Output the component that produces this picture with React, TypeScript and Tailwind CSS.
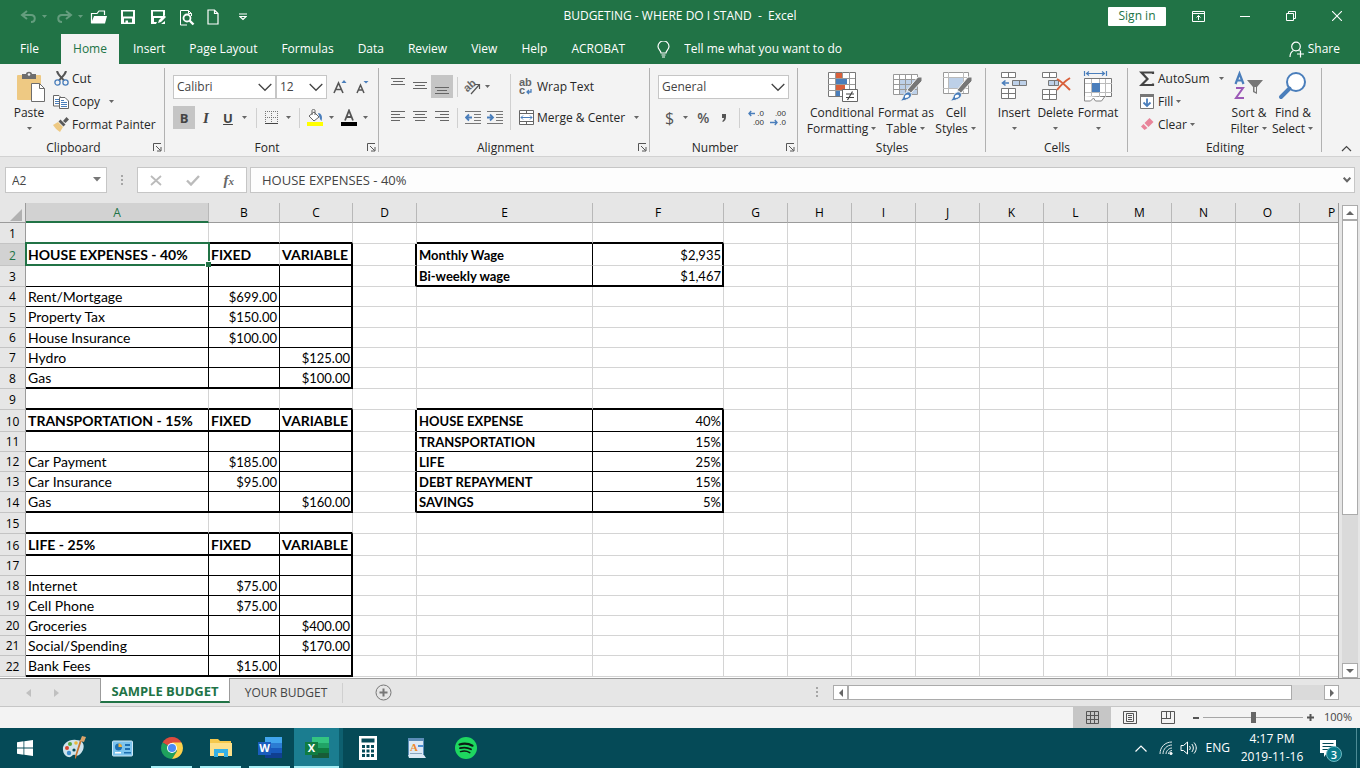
import { useState } from "react";
import type { ReactNode } from "react";
import clsx from "clsx";

/* ---------- data ---------- */

const columns = [
  { id: "A", w: "w-[183px]" },
  { id: "B", w: "w-[71px]" },
  { id: "C", w: "w-[73px]" },
  { id: "D", w: "w-16" },
  { id: "E", w: "w-44" },
  { id: "F", w: "w-[131px]" },
  ...["G", "H", "I", "J", "K", "L", "M", "N", "O", "P"].map((id) => ({ id, w: "w-16" })),
];

const cells: Record<string, string> = {
  A2: "HOUSE EXPENSES - 40%", B2: "FIXED", C2: "VARIABLE",
  A4: "Rent/Mortgage", B4: "$699.00",
  A5: "Property Tax", B5: "$150.00",
  A6: "House Insurance", B6: "$100.00",
  A7: "Hydro", C7: "$125.00",
  A8: "Gas", C8: "$100.00",
  A10: "TRANSPORTATION - 15%", B10: "FIXED", C10: "VARIABLE",
  A12: "Car Payment", B12: "$185.00",
  A13: "Car Insurance", B13: "$95.00",
  A14: "Gas", C14: "$160.00",
  A16: "LIFE - 25%", B16: "FIXED", C16: "VARIABLE",
  A18: "Internet", B18: "$75.00",
  A19: "Cell Phone", B19: "$75.00",
  A20: "Groceries", C20: "$400.00",
  A21: "Social/Spending", C21: "$170.00",
  A22: "Bank Fees", B22: "$15.00",
  E2: "Monthly Wage", F2: "$2,935",
  E3: "Bi-weekly wage", F3: "$1,467",
  E10: "HOUSE EXPENSE", F10: "40%",
  E11: "TRANSPORTATION", F11: "15%",
  E12: "LIFE", F12: "25%",
  E13: "DEBT REPAYMENT", F13: "15%",
  E14: "SAVINGS", F14: "5%",
};

const tallRows = [2, 10, 16];
const midRows = [1, 3, 5, 8, 9, 14, 15, 22];

function rowHeight(row: number) {
  if (tallRows.includes(row)) return "h-[22px]";
  if (midRows.includes(row)) return "h-[21px]";
  return "h-5";
}

const inBudget = (row: number) => (row >= 2 && row <= 8) || (row >= 10 && row <= 14) || row >= 16;
const inSummary = (row: number) => row === 2 || row === 3 || (row >= 10 && row <= 14);

function bottomBorder(col: string, row: number) {
  if ("ABC".includes(col)) {
    if ([1, 2, 8, 9, 10, 14, 15, 16, 22].includes(row)) return "border-b-2 border-b-black";
    return "border-b border-b-black";
  }
  if ("EF".includes(col)) {
    if ([1, 3, 9, 14].includes(row)) return "border-b-2 border-b-black";
    if (row >= 10 && row <= 13) return "border-b border-b-black";
  }
  return "border-b border-b-[#d4d4d4]";
}

function rightBorder(col: string, row: number) {
  if (col === "C" && inBudget(row)) return "border-r-2 border-r-black";
  if ("DF".includes(col) && inSummary(row)) return "border-r-2 border-r-black";
  if ("AB".includes(col) && inBudget(row) && !(col === "B" && row === 2)) return "border-r border-r-black";
  if (col === "E" && inSummary(row)) return "border-r border-r-black";
  return "border-r border-r-[#d4d4d4]";
}

/* ---------- small parts ---------- */

function Caret({ className = "" }: { className?: string }) {
  return (
    <svg width="7" height="4" viewBox="0 0 7 4" className={clsx("shrink-0", className)} aria-hidden>
      <path d="M1 0h5L3.500 3z" fill="#666" />
    </svg>
  );
}

function Chevron() {
  return (
    <svg width="14" height="9" viewBox="0 0 14 9" className="pointer-events-none absolute right-1 top-2" fill="none" stroke="#444" strokeWidth="1.3" aria-hidden>
      <path d="M.7 1 7 7.300 13.300 1" />
    </svg>
  );
}

function Launcher({ label }: { label: string }) {
  return (
    <button type="button" aria-label={label} className="absolute right-[3px] bottom-1">
      <svg width="9" height="9" viewBox="0 0 9 9" fill="none" stroke="#555" aria-hidden>
        <path d="M.5 8V.5H8M3 3l4.500 4.500M8 4v4H4" />
      </svg>
    </button>
  );
}

function Group({ label, width, launcher, children }: { label: string; width: string; launcher?: boolean; children: ReactNode }) {
  return (
    <section aria-label={label} className={clsx("relative flex h-[92px] shrink-0 flex-col", width)}>
      <div className="flex h-[76px] items-start">{children}</div>
      <div className="h-4 text-center leading-4">{label}</div>
      {launcher && <Launcher label={`${label} settings`} />}
      <span className="absolute top-1 right-0 h-[84px] w-px bg-[#b1b1b1]" />
    </section>
  );
}

function BigButton({ icon, lines, width, caretBelow }: { icon: ReactNode; lines: string[]; width: string; caretBelow?: boolean }) {
  return (
    <button type="button" className={clsx("flex shrink-0 flex-col items-center pt-1.5 leading-4", width)}>
      {icon}
      <span className="mt-[3px] whitespace-nowrap">{lines[0]}</span>
      {caretBelow ? (
        <Caret className="mt-1.5" />
      ) : (
        <span className="flex items-center gap-0.5 whitespace-nowrap">
          {lines[1]}
          <Caret />
        </span>
      )}
    </button>
  );
}

function SmallButton({ icon, label, caret, gap = "ml-0.5" }: { icon: ReactNode; label: string; caret?: boolean; gap?: string }) {
  return (
    <button type="button" className="flex h-[23px] items-center whitespace-nowrap">
      <span className="mr-[3px] flex w-4 justify-center">{icon}</span>
      {label}
      {caret && <Caret className={gap} />}
    </button>
  );
}

function Lines({ d, active, label }: { d: string; active?: boolean; label: string }) {
  return (
    <button type="button" aria-label={label} className={clsx("flex h-[23px] w-[22px] items-center justify-center", active && "bg-[#c5c5c5]")}>
      <svg width="14" height="17" viewBox="0 0 14 17" stroke="#666" aria-hidden>
        <path d={d} />
      </svg>
    </button>
  );
}

function Separator({ className = "h-5" }: { className?: string }) {
  return <span className={clsx("w-px bg-[#d0d0d0]", className)} />;
}

/* ---------- title bar + tabs ---------- */

function TitleBar() {
  return (
    <header className="grid h-[34px] grid-cols-[1fr_auto_1fr] items-center text-white">
      <div className="flex items-center pl-5">
        <button type="button" aria-label="Undo" className="flex items-center gap-1 opacity-30">
          <svg width="17" height="14" viewBox="0 0 17 14" fill="none" stroke="#fff" strokeWidth="2" aria-hidden>
            <path d="M7 1 2 5l5 4M3 5h8c5 0 5 7 0 7" />
          </svg>
          <svg width="7" height="4" aria-hidden><path d="M1 0h5L3.500 3z" fill="#fff" /></svg>
        </button>
        <button type="button" aria-label="Redo" className="ml-2 flex items-center gap-1 opacity-30">
          <svg width="17" height="14" viewBox="0 0 17 14" fill="none" stroke="#fff" strokeWidth="2" aria-hidden>
            <path d="m10 1 5 4-5 4m4-4H6c-5 0-5 7 0 7" />
          </svg>
          <svg width="7" height="4" aria-hidden><path d="M1 0h5L3.500 3z" fill="#fff" /></svg>
        </button>
        <button type="button" aria-label="Open" className="ml-1.5">
          <svg width="18" height="16" viewBox="0 0 18 16" aria-hidden>
            <path d="M1.500 14V4.500H7L9 2h5.500v4" fill="none" stroke="#fff" strokeWidth="1.200" />
            <path d="M4 7h13l-2 7.500H1z" fill="#fff" />
          </svg>
        </button>
        <button type="button" aria-label="Save" className="ml-3">
          <svg width="16" height="16" viewBox="0 0 16 16" aria-hidden>
            <path fillRule="evenodd" d="M1 1h14v14H1zM3 2.500V7.500h10V2.500zM4 9.500v4h1.500v-2H8v2h4v-4z" fill="#fff" />
          </svg>
        </button>
        <button type="button" aria-label="Save as" className="ml-3.5">
          <svg width="17" height="16" viewBox="0 0 17 16" aria-hidden>
            <path fillRule="evenodd" d="M1 1h14v5l-3 3H4v4h3l-1 2H1zM3 2.500V7h10V2.500z" fill="#fff" />
            <path d="m8 14 1-3 5-5 2 2-5 5zM11 15h4v-3z" fill="#fff" />
          </svg>
        </button>
        <button type="button" aria-label="Print preview" className="ml-3">
          <svg width="16" height="17" viewBox="0 0 16 17" fill="none" stroke="#fff" aria-hidden>
            <path d="M8 16H1.500V1.500h8l3 3V7M9.500 1.500v3h3" />
            <circle cx="8" cy="9" r="3.500" strokeWidth="1.800" />
            <path d="m10.500 11.500 4 4" strokeWidth="2.400" />
          </svg>
        </button>
        <button type="button" aria-label="New" className="ml-3">
          <svg width="12" height="16" viewBox="0 0 12 16" fill="none" stroke="#fff" strokeWidth="1.200" aria-hidden>
            <path d="M1 1h6.500L11 4.500V15H1zM7.500 1v3.500H11" />
          </svg>
        </button>
        <button type="button" aria-label="Customize toolbar" className="ml-5">
          <svg width="8" height="8" viewBox="0 0 8 8" fill="none" stroke="#fff" strokeWidth="1.200" aria-hidden>
            <path d="M0 1h8M.8 3.500 4 6.500l3.200-3z" />
          </svg>
        </button>
      </div>
      <h1 className="pb-0.5 whitespace-nowrap">BUDGETING - WHERE DO I STAND&nbsp; -&nbsp; Excel</h1>
      <div className="flex items-center justify-end pb-0.5">
        <button type="button" className="mr-[26px] h-[19px] w-[58px] rounded-[1px] bg-white leading-4 text-[#217346]">Sign in</button>
        <button type="button" aria-label="Ribbon display options" className="mr-[35px]">
          <svg width="13" height="11" viewBox="0 0 13 11" fill="none" stroke="#fff" aria-hidden>
            <path d="M.5.5h12v10H.5zM.5 2.500h12M6.500 9V4.500M4.500 6.500l2-2 2 2" />
          </svg>
        </button>
        <button type="button" aria-label="Minimize" className="mr-[36px]">
          <svg width="10" height="10" stroke="#fff" aria-hidden><path d="M0 5.500h10" /></svg>
        </button>
        <button type="button" aria-label="Restore" className="mr-9">
          <svg width="10" height="10" viewBox="0 0 10 10" fill="none" stroke="#fff" aria-hidden>
            <path d="M.5 2.500h7v7h-7zM2.500 2.500v-2h7v7h-2" />
          </svg>
        </button>
        <button type="button" aria-label="Close" className="mr-[18px]">
          <svg width="10" height="10" viewBox="0 0 10 10" stroke="#fff" strokeWidth="1.100" aria-hidden>
            <path d="m0 0 10 10M10 0 0 10" />
          </svg>
        </button>
      </div>
    </header>
  );
}

const tabs = ["Home", "Insert", "Page Layout", "Formulas", "Data", "Review", "View", "Help", "ACROBAT"];

function RibbonTabs() {
  return (
    <nav className="flex h-[30px] items-stretch text-white">
      <button type="button" className="w-[61px] pr-0.5">File</button>
      {tabs.map((t) => (
        <button key={t} type="button" className={clsx("whitespace-nowrap", t === "Home" ? "mr-0.5 w-[58px] bg-[#f3f3f3] text-[#217346]" : "px-3")}>
          {t}
        </button>
      ))}
      <label className="ml-5 flex items-center gap-3.5">
        <svg width="13" height="17" viewBox="0 0 13 17" fill="none" stroke="#fff" strokeWidth="1.200" aria-hidden>
          <path d="M4 12c0-2.500-3-3.500-3-6.500a5.500 5.500 0 0 1 11 0c0 3-3 4-3 6.500zM4.500 14h4M5 16h3" />
        </svg>
        <input type="text" aria-label="Tell me what you want to do" placeholder="Tell me what you want to do" className="w-44 bg-transparent outline-none placeholder:text-white" />
      </label>
      <button type="button" className="mr-5 ml-auto flex items-center gap-1">
        <svg width="15" height="17" viewBox="0 0 15 17" fill="none" stroke="#fff" strokeWidth="1.200" aria-hidden>
          <circle cx="7" cy="5.500" r="4.300" />
          <path d="M1 16c0-3.500 1.500-5.500 3.500-6.500M9.500 9.300l1 .7M11.500 9.500v7M8 13h7" />
        </svg>
        Share
      </button>
    </nav>
  );
}

/* ---------- ribbon ---------- */

function ClipboardGroup() {
  return (
    <Group label="Clipboard" width="w-[165px] pr-[18px]" launcher>
      <BigButton
        width="ml-2 w-[42px]"
        lines={["Paste"]}
        caretBelow
        icon={
          <svg width="32" height="32" viewBox="0 0 32 32" aria-hidden>
            <rect x="4" y="5" width="24" height="25" rx="1" fill="#eec983" />
            <path d="M9 4h4c0-3 6-3 6 0h4v5H9z" fill="#6d6d6d" />
            <circle cx="16" cy="4.500" r="1.300" fill="#f3f3f3" />
            <path d="M18.500 13.500h8l5 5v13h-13z" fill="#fff" stroke="#6d6d6d" />
            <path d="M26.500 13.500v5h5" fill="none" stroke="#6d6d6d" />
          </svg>
        }
      />
      <div className="ml-[3px] flex flex-col pt-[3px]">
        <SmallButton
          label="Cut"
          icon={
            <svg width="15" height="15" viewBox="0 0 15 15" fill="none" aria-hidden>
              <path d="M3 0c1 4 4 6 7 9.500M12 0c-1 4-4 6-7 9.500" stroke="#555" strokeWidth="2" />
              <circle cx="3.500" cy="11.500" r="2.600" stroke="#4a7ebb" strokeWidth="1.300" />
              <circle cx="11.500" cy="11.500" r="2.600" stroke="#4a7ebb" strokeWidth="1.300" />
            </svg>
          }
        />
        <SmallButton
          label="Copy"
          caret
          gap="ml-2"
          icon={
            <svg width="16" height="15" viewBox="0 0 16 15" aria-hidden>
              <path d="M.5 1.500H6L8.500 4v8h-8z" fill="#fff" stroke="#666" />
              <path d="M2 5.500h4M2 7.500h4M2 9.500h4" stroke="#4a7ebb" />
              <path d="M6.500 3.500H12L15.500 7v7.500h-9z" fill="#fff" stroke="#666" />
              <path d="M8 8.500h6M8 10.500h6M8 12.500h6M8 6.500h3" stroke="#4a7ebb" />
            </svg>
          }
        />
        <SmallButton
          label="Format Painter"
          icon={
            <svg width="16" height="15" viewBox="0 0 16 15" aria-hidden>
              <path d="m5 5 5 5-3 5c-3-2-5-4-7-7z" fill="#eec983" />
              <path d="m5.500 4.500 2-2 5 5-2 2zM10 4l3.500-4L16 2.500 12.500 6z" fill="#5a5a5a" />
            </svg>
          }
        />
      </div>
    </Group>
  );
}

const boxClass = "h-6 w-full appearance-none border border-[#c6c6c6] bg-white pl-[3px] text-xs text-[#444] outline-none";

function FontGroup() {
  return (
    <Group label="Font" width="w-[214px] pl-2 pr-[18px]" launcher>
      <div className="flex shrink-0 flex-col gap-[7px] pt-[11px]">
        <div className="flex h-6 items-center">
          <div className="relative w-[103px]">
            <select aria-label="Font name" className={boxClass}><option>Calibri</option></select>
            <Chevron />
          </div>
          <div className="relative w-[51px]">
            <select aria-label="Font size" className={boxClass}><option>12</option></select>
            <Chevron />
          </div>
          <button type="button" aria-label="Increase font size" className="ml-1.5">
            <svg width="14" height="16" viewBox="0 0 14 16" aria-hidden>
              <path d="M1 14 5.500 4l4.500 10M3 10.500h5" fill="none" stroke="#555" strokeWidth="1.600" />
              <path d="M8.500 4 11 1l2.500 3z" fill="#4a7ebb" />
            </svg>
          </button>
          <button type="button" aria-label="Decrease font size" className="ml-2">
            <svg width="14" height="16" viewBox="0 0 14 16" aria-hidden>
              <path d="m2 14 3.500-8L9 14M3.500 11h4" fill="none" stroke="#555" strokeWidth="1.500" />
              <path d="M8.500 2h5L11 4.500z" fill="#4a7ebb" />
            </svg>
          </button>
        </div>
        <div className="flex h-[23px] items-center text-[13px] text-[#444]">
          <button type="button" aria-pressed className="h-[23px] w-[22px] bg-[#c5c5c5] leading-5 font-bold">B</button>
          <button type="button" className="w-[22px] font-['Liberation_Serif',serif] text-[15px] leading-5 font-bold italic">I</button>
          <button type="button" className="w-[22px] leading-5 font-bold underline">U</button>
          <Caret className="ml-0.5" />
          <Separator className="ml-2 h-5" />
          <button type="button" aria-label="Borders" className="ml-2">
            <svg width="13" height="13" viewBox="0 0 13 13" fill="none" stroke="#777" aria-hidden>
              <path d="M0 .5h13M0 6.500h13M.5 0v12M6.500 0v12M12.500 0v12" strokeDasharray="1 1" />
              <path d="M0 12.500h13" stroke="#444" />
            </svg>
          </button>
          <Caret className="ml-[7px]" />
          <Separator className="ml-[7px] h-5" />
          <button type="button" aria-label="Fill color" className="ml-[7px]">
            <svg width="16" height="17" viewBox="0 0 16 17" aria-hidden>
              <path d="m2 7 5-4 5 5-5 4z" fill="#fff" stroke="#666" />
              <path d="M5 6V1.500c0-1.500 3-1.500 3 0V6" fill="none" stroke="#666" />
              <path d="M11 4c3 0 5 3 3.500 8C13 11 13 9 12 7z" fill="#4a7ebb" />
              <rect y="13" width="16" height="4" fill="#ffff00" />
            </svg>
          </button>
          <Caret className="ml-[5px]" />
          <button type="button" aria-label="Font color" className="ml-1.5">
            <svg width="16" height="17" viewBox="0 0 16 17" aria-hidden>
              <path d="m4 11.500 4-10 4 10M5.500 8h5" fill="none" stroke="#555" strokeWidth="1.800" />
              <rect y="13" width="16" height="4" fill="#000" />
            </svg>
          </button>
          <Caret className="ml-[5px]" />
        </div>
      </div>
    </Group>
  );
}

function AlignmentGroup() {
  return (
    <Group label="Alignment" width="w-[271px] pr-[26px] pl-2" launcher>
      <div className="flex shrink-0 flex-col gap-2 pt-[11px]">
        <div className="flex h-[23px] items-center">
          <Lines label="Top align" d="M0 .5h14M2 3.500h10M0 6.500h14" />
          <Lines label="Middle align" d="M0 4.500h14M2 7.500h10M0 10.500h14" />
          <Lines label="Bottom align" active d="M0 9.500h14M2 12.500h10M0 15.500h14" />
          <Separator className="ml-1 h-5" />
          <button type="button" aria-label="Orientation" className="ml-1.5">
            <svg width="18" height="18" viewBox="0 0 18 18" className="overflow-visible" aria-hidden>
              <text x="0" y="12" transform="rotate(-42 5 9)" fontSize="11" fontWeight="700" fill="#666" fontFamily="Liberation Sans">ab</text>
              <path d="m7 16 8-9M15.500 11V6.500H11" fill="none" stroke="#555" strokeWidth="1.200" />
            </svg>
          </button>
          <Caret className="ml-0.5" />
        </div>
        <div className="flex h-[23px] items-center">
          <Lines label="Align left" d="M0 2.500h14M0 5.500h9M0 8.500h14M0 11.500h9" />
          <Lines label="Center" d="M0 2.500h14M2 5.500h10M0 8.500h14M2 11.500h10" />
          <Lines label="Align right" d="M0 2.500h14M5 5.500h9M0 8.500h14M5 11.500h9" />
          <Separator className="ml-1 h-5" />
          <button type="button" aria-label="Decrease indent" className="ml-[7px]">
            <svg width="16" height="14" viewBox="0 0 16 14" fill="none" aria-hidden>
              <path d="M0 .5h16M9 3.500h7M9 6.500h7M9 9.500h7M0 12.500h16" stroke="#777" />
              <path d="M7 6.500H1.500M4 3.500l-3 3 3 3" stroke="#4a7ebb" strokeWidth="1.800" />
            </svg>
          </button>
          <button type="button" aria-label="Increase indent" className="ml-1.5">
            <svg width="16" height="14" viewBox="0 0 16 14" fill="none" aria-hidden>
              <path d="M0 .5h16M9 3.500h7M9 6.500h7M9 9.500h7M0 12.500h16" stroke="#777" />
              <path d="M0 6.500h5.500M3 3.500l3 3-3 3" stroke="#4a7ebb" strokeWidth="1.800" />
            </svg>
          </button>
        </div>
      </div>
      <Separator className="mt-2.5 ml-[7px] h-14 shrink-0" />
      <div className="ml-[7px] flex flex-col gap-2 pt-[11px]">
        <SmallButton
          label="Wrap Text"
          icon={
            <svg width="14" height="20" viewBox="0 0 14 20" className="overflow-visible" aria-hidden>
              <g fontSize="11" fontWeight="700" fill="#666" fontFamily="Liberation Sans">
                <text x="0" y="9">ab</text>
                <text x="0" y="17">c</text>
              </g>
              <path d="M12 12v3H8M10 13l-2 2 2 2" fill="none" stroke="#4a7ebb" strokeWidth="1.300" />
            </svg>
          }
        />
        <SmallButton
          label="Merge & Center"
          caret
          gap="ml-2"
          icon={
            <svg width="15" height="15" viewBox="0 0 15 15" fill="none" aria-hidden>
              <path d="M.5.5h14v14H.5z" fill="#fff" stroke="#666" />
              <path d="M0 3.500h15M0 11.500h15M7.500 0v3.500M7.500 11.500V15" stroke="#666" />
              <path d="M2 7.500h11M4 5.500l-2 2 2 2M11 5.500l2 2-2 2" stroke="#4a7ebb" />
            </svg>
          }
        />
      </div>
    </Group>
  );
}

function DecimalIcon({ top, bottom, arrow }: { top: string; bottom: string; arrow: string }) {
  return (
    <svg width="16" height="18" viewBox="0 0 16 18" className="overflow-visible" aria-hidden>
      <path d={arrow} fill="none" stroke="#4a7ebb" strokeWidth="1.400" />
      <g fontSize="8" textAnchor="end" fill="#333" fontFamily="Liberation Sans">
        <text x="16" y="7">{top}</text>
        <text x="16" y="16">{bottom}</text>
      </g>
    </svg>
  );
}

function NumberGroup() {
  return (
    <Group label="Number" width="w-[148px] pl-2 pr-[26px]" launcher>
      <div className="flex shrink-0 flex-col gap-[7px] pt-[11px]">
        <div className="relative w-[131px]">
          <select aria-label="Number format" className={boxClass}><option>General</option></select>
          <Chevron />
        </div>
        <div className="flex h-[23px] items-center text-base text-[#555]">
          <button type="button" className="ml-[7px] leading-5">$</button>
          <Caret className="ml-2" />
          <button type="button" className="ml-2 text-sm leading-5 font-semibold">%</button>
          <button type="button" aria-label="Comma style" className="ml-3">
            <svg width="6" height="8" viewBox="0 0 6 8" aria-hidden>
              <path d="M1 0h4v3c0 2-1 4-3 5l-.8-.8C2.500 6 3 5 3 4H1z" fill="#555" />
            </svg>
          </button>
          <Separator className="ml-3 h-5" />
          <button type="button" aria-label="Increase decimal" className="ml-2">
            <DecimalIcon top=".0" bottom=".00" arrow="M7 4.500H1M3.200 2 1 4.500 3.200 7" />
          </button>
          <button type="button" aria-label="Decrease decimal" className="ml-1.5">
            <DecimalIcon top=".00" bottom=".0" arrow="M0 13.500h7M4.800 11 7 13.500 4.800 16" />
          </button>
        </div>
      </div>
    </Group>
  );
}

function Brush() {
  return (
    <>
      <path d="m17 20 11-13h4v4L21 23z" fill="#777" stroke="#f3f3f3" />
      <path d="M9 31c5-1 3-7 8-9 4-1 6 3 3 6-3 2-6 3-11 3z" fill="#4a7ebb" stroke="#f3f3f3" />
      <path d="M15 26c2-2 4-1 4 0s-2 2-4 2z" fill="#fff" />
    </>
  );
}

function StylesGroup() {
  return (
    <Group label="Styles" width="w-[188px]">
      <BigButton
        width="ml-2 w-[72px]"
        lines={["Conditional", "Formatting"]}
        icon={
          <svg width="32" height="32" viewBox="0 0 32 32" aria-hidden>
            <path d="M2.500 2.500h27v24h-27z" fill="#fff" stroke="#777" />
            <path d="M2 8.500h27M2 14.500h27M2 20.500h27M9.500 2v24M23.500 2v24M16.500 2v24" stroke="#999" />
            <path d="M10 3h6v5h-6zM10 15h9v5h-9z" fill="#d9603b" />
            <path d="M10 9h11v5H10zM10 21h4v5h-4z" fill="#4a7ebb" />
            <path d="M16.500 19.500h15v12h-15z" fill="#fff" stroke="#666" />
            <path d="M20 24h8M20 27.500h8M26.500 21.500l-5 8.500" stroke="#444" strokeWidth="1.200" />
          </svg>
        }
      />
      <BigButton
        width="w-[56px]"
        lines={["Format as", "Table"]}
        icon={
          <svg width="32" height="32" viewBox="0 0 32 32" aria-hidden>
            <path d="M3.500 4.500h24v20h-24z" fill="#fff" />
            <path d="M10 10h17v14H10z" fill="#bdd0e8" />
            <path d="M3.500 4.500h24v20h-24zM3 9.500h24M3 14.500h24M3 19.500h24M9.500 4v20M15.500 4v20M21.500 4v20" fill="none" stroke="#999" />
            <Brush />
          </svg>
        }
      />
      <BigButton
        width="w-[44px]"
        lines={["Cell", "Styles"]}
        icon={
          <svg width="32" height="32" viewBox="0 0 32 32" aria-hidden>
            <path d="M3.500 2.500h25v21h-25z" fill="#fff" stroke="#999" />
            <path d="M3 7.500h25M3 18.500h25M8.500 2v21M23.500 2v21" stroke="#bbb" />
            <path d="M9 8h14v10H9z" fill="#bdd0e8" />
            <Brush />
          </svg>
        }
      />
    </Group>
  );
}

function CellsGroup() {
  return (
    <Group label="Cells" width="w-[142px]">
      <BigButton
        width="ml-2 w-10"
        lines={["Insert"]}
        caretBelow
        icon={
          <svg width="28" height="32" viewBox="0 0 28 32" aria-hidden>
            <path d="M1.500 2.500h14v5h-14zM8.500 2v5M1.500 18.500h14v10h-14zM1 23.500h14M8.500 18v10" fill="#fff" stroke="#777" />
            <path d="M12.500 10.500h14v5h-14zM19.500 10v5" fill="#bdd0e8" stroke="#777" />
            <path d="M9 13H3M5.500 10.500 2.500 13l3 2.500" fill="none" stroke="#4a7ebb" strokeWidth="1.600" />
          </svg>
        }
      />
      <BigButton
        width="w-[43px]"
        lines={["Delete"]}
        caretBelow
        icon={
          <svg width="30" height="32" viewBox="0 0 30 32" aria-hidden>
            <path d="M1.500 2.500h14v5h-14zM8.500 2v5M1.500 19.500h14v10h-14zM1 24.500h14M8.500 19v10" fill="#fff" stroke="#777" />
            <path d="M7.500 10.500h10v5h-10zM13.500 10v5" fill="#bdd0e8" stroke="#777" />
            <path d="M16 9c5 3 9 7 13 11M29 8c-5 3-9 7-13 12" fill="none" stroke="#d9603b" strokeWidth="2" />
          </svg>
        }
      />
      <BigButton
        width="w-[42px]"
        lines={["Format"]}
        caretBelow
        icon={
          <svg width="30" height="32" viewBox="0 0 30 32" aria-hidden>
            <path d="M1.500 1v5M23.500 1v5M3 3.500h19M6 1.500 3.500 3.500 6 5.500M19 1.500l2.500 2L19 5.500" fill="none" stroke="#4a7ebb" strokeWidth="1.200" />
            <path d="M1.500 8.500h27v18h-27z" fill="#fff" stroke="#777" />
            <path d="M2 13.500h27M2 22.500h27M8.500 9v18M16.500 9v18M22.500 9v18" stroke="#bbb" />
            <path d="M9 13h8v9H9z" fill="#4a7ebb" />
            <path d="M1.500 26v5h6l3-3 2 3h6l3-4" fill="#fff" stroke="#888" />
          </svg>
        }
      />
    </Group>
  );
}

function EditingGroup() {
  return (
    <Group label="Editing" width="w-[194px]">
      <div className="ml-[11px] flex w-[92px] shrink-0 flex-col pt-[3px]">
        <SmallButton
          label="AutoSum"
          caret
          gap="ml-2"
          icon={
            <svg width="16" height="16" viewBox="0 0 16 16" fill="none" aria-hidden>
              <path d="M14 3V1.500H2.500L8.500 8l-6 6H14V12.500" stroke="#444" strokeWidth="2.200" />
            </svg>
          }
        />
        <SmallButton
          label="Fill"
          caret
          icon={
            <svg width="14" height="15" viewBox="0 0 14 15" fill="none" aria-hidden>
              <path d="M.5.5h13v14H.5z" fill="#fff" stroke="#777" />
              <path d="M0 0h14v3H0z" fill="#777" />
              <path d="M7 4.500V12M3.500 8.500 7 12l3.500-3.500" stroke="#4a7ebb" strokeWidth="1.800" />
            </svg>
          }
        />
        <SmallButton
          label="Clear"
          caret
          icon={
            <svg width="14" height="13" viewBox="0 0 14 13" aria-hidden>
              <path d="m4.500 5 5-5 4 4-5 5z" fill="#e8849a" />
              <path d="M3.500 6 1 8.500l3.500 3.500L7.500 10z" fill="#e8849a" />
            </svg>
          }
        />
      </div>
      <BigButton
        width="w-9"
        lines={["Sort &", "Filter"]}
        icon={
          <svg width="32" height="32" viewBox="0 0 32 32" aria-hidden>
            <path d="m2.500 14 4-10.500 4 10.500M4 10.500h5" fill="none" stroke="#4a7ebb" strokeWidth="2.200" />
            <path d="M3 18h7L3 28h8" fill="none" stroke="#9b59b6" strokeWidth="2" />
            <path d="M14 10h16l-6 7v7l-4-2v-5z" fill="#777" />
            <path d="M21.500 17h1.500v5l-1.500-.8z" fill="#f3f3f3" />
          </svg>
        }
      />
      <BigButton
        width="ml-2 w-9"
        lines={["Find &", "Select"]}
        icon={
          <svg width="32" height="32" viewBox="0 0 32 32" fill="none" stroke="#4a7ebb" aria-hidden>
            <circle cx="19" cy="12" r="9" fill="#fff" strokeWidth="2" />
            <path d="M12.500 18.500 4 27" strokeWidth="4" strokeLinecap="round" />
          </svg>
        }
      />
    </Group>
  );
}

function Ribbon() {
  return (
    <div className="flex h-[93px] overflow-hidden border-b border-[#d2d2d2] bg-[#f3f3f3] text-[#262626]">
      <ClipboardGroup />
      <FontGroup />
      <AlignmentGroup />
      <NumberGroup />
      <StylesGroup />
      <CellsGroup />
      <EditingGroup />
      <button type="button" aria-label="Collapse the ribbon" className="mr-2 mb-1 ml-auto self-end">
        <svg width="11" height="7" viewBox="0 0 11 7" fill="none" stroke="#444" strokeWidth="1.200" aria-hidden>
          <path d="m1 6 4.500-4.500L10 6" />
        </svg>
      </button>
    </div>
  );
}

/* ---------- formula bar ---------- */

function Dots() {
  return (
    <svg width="3" height="11" fill="#a6a6a6" aria-hidden>
      <path d="M0 0h2v2H0zM0 4h2v2H0zM0 8h2v2H0z" />
    </svg>
  );
}

function FormulaBar() {
  return (
    <div className="flex h-[46px] items-start pt-2.5 pr-[5px] pl-[5px] text-[13px] text-[#444]">
      <div className="relative h-[26px] w-[102px]">
        <input type="text" aria-label="Name box" defaultValue="A2" className="h-full w-full border border-[#c6c6c6] bg-white pl-1.5 text-xs outline-none" />
        <svg width="8" height="5" className="absolute top-[10px] right-1.5" aria-hidden><path d="M0 0h8L4 4.500z" fill="#777" /></svg>
      </div>
      <div className="flex h-[26px] w-[30px] items-center justify-center"><Dots /></div>
      <div className="flex h-[26px] w-[110px] items-center justify-between border border-[#c6c6c6] bg-white pr-3 pl-3">
        <button type="button" aria-label="Cancel">
          <svg width="12" height="11" viewBox="0 0 12 11" stroke="#bbb" strokeWidth="1.800" aria-hidden><path d="m1 1 10 9M11 1 1 10" /></svg>
        </button>
        <button type="button" aria-label="Enter">
          <svg width="14" height="11" viewBox="0 0 14 11" fill="none" stroke="#bbb" strokeWidth="2.400" aria-hidden><path d="m1 5.500 4 4L13 1" /></svg>
        </button>
        <button type="button" aria-label="Insert function" className="font-['Liberation_Serif',serif] text-[15px] leading-5 font-bold text-[#666] italic">
          f<span className="text-[11px]">x</span>
        </button>
      </div>
      <div className="relative ml-[3px] h-[26px] flex-1">
        <input type="text" aria-label="Formula" defaultValue="HOUSE EXPENSES - 40%" className="h-full w-full border border-[#c6c6c6] bg-[#fdfdfd] pl-[11px] outline-none" />
        <svg width="8" height="6" viewBox="0 0 8 6" className="absolute top-2.5 right-1" fill="none" stroke="#666" strokeWidth="2" aria-hidden><path d="m.7.7 3.300 3.600L7.300.7" /></svg>
      </div>
    </div>
  );
}

/* ---------- sheet ---------- */

function Sheet() {
  return (
    <table className="w-max table-fixed border-separate border-spacing-0 bg-white [font-family:Lato,sans-serif] text-[13px] leading-4 text-black">
      <colgroup>
        <col className="w-[26px]" />
        {columns.map((c) => <col key={c.id} className={c.w} />)}
      </colgroup>
      <thead>
        <tr className="h-5 bg-[#e6e6e6] [font-family:'Open_Sans',sans-serif] text-xs">
          <th aria-label="Select all" className="border-r border-b border-[#9b9b9b] p-0">
            <svg width="12" height="12" className="mt-1 ml-2.5" aria-hidden><path d="M12 0v12H0z" fill="#b1b1b1" /></svg>
          </th>
          {columns.map((c) => (
            <th
              key={c.id}
              scope="col"
              className={clsx(
                "h-5 border-r border-r-[#b8b8b8] p-0 font-normal",
                c.id === "A" ? "border-b-2 border-b-[#217346] bg-[#d2d2d2] pt-px text-[#217346]" : "border-b border-b-[#9b9b9b]",
              )}
            >
              {c.id}
            </th>
          ))}
        </tr>
      </thead>
      <tbody>
        {Array.from({ length: 22 }, (_, i) => i + 1).map((row) => (
          <tr key={row} className={rowHeight(row)}>
            <th
              scope="row"
              className={clsx(
                "border-r border-b border-r-[#9b9b9b] border-b-[#c4c4c4] px-0 pb-0 [font-family:'Open_Sans',sans-serif] text-xs leading-4 font-normal",
                row === 2 ? "bg-[#d2d2d2] text-[#217346]" : "bg-[#e6e6e6]",
                rowHeight(row) === "h-5" ? "pt-0" : "pt-0.5",
              )}
            >
              {row}
            </th>
            {columns.map(({ id }) => {
              const key = id + row;
              const value = cells[key] ?? "";
              const heading = tallRows.includes(row) && "ABC".includes(id);
              return (
                <td
                  key={key}
                  className={clsx(
                    "pb-0 pl-0.5 whitespace-nowrap",
                    bottomBorder(id, row),
                    rightBorder(id, row),
                    heading ? "pt-0.5 text-sm leading-4" : "pt-0",
                    !heading && id === "A" && "text-sm leading-4",
                    (heading || id === "E") && "font-bold",
                    "CF".includes(id) ? "pr-px" : "pr-0.5",
                    /^\$|%$/.test(value) && id !== "A" && "text-right",
                    key === "A2" && "relative",
                  )}
                >
                  {value}
                  {key === "A2" && (
                    <>
                      <span className="absolute -top-0.5 -right-0.5 -bottom-0.5 -left-px border-2 border-[#217346]" />
                      <span className="absolute -right-[3px] -bottom-[3px] size-[6px] border-t border-l border-white bg-[#217346]" />
                    </>
                  )}
                </td>
              );
            })}
          </tr>
        ))}
      </tbody>
    </table>
  );
}

function ScrollButton({ label, d, size }: { label: string; d: string; size: string }) {
  return (
    <button type="button" aria-label={label} className={clsx("flex shrink-0 items-center justify-center border border-[#ababab] bg-white", size)}>
      <svg width="8" height="8" viewBox="0 0 8 8" aria-hidden><path d={d} fill="#666" /></svg>
    </button>
  );
}

function SheetTabs() {
  const [active, setActive] = useState("SAMPLE BUDGET");
  return (
    <div className="flex h-[29px] border-b border-[#c6c6c6] bg-[#e6e6e6]">
      <div className="flex w-[100px] items-center gap-[23px] border-t border-[#9b9b9b] pl-[26px]">
        <svg width="5" height="8" aria-hidden><path d="M5 0v8L0 4z" fill="#c0c0c0" /></svg>
        <svg width="5" height="8" aria-hidden><path d="M0 0v8l5-4z" fill="#c0c0c0" /></svg>
      </div>
      {["SAMPLE BUDGET", "YOUR BUDGET"].map((name) => (
        <button
          key={name}
          type="button"
          onClick={() => setActive(name)}
          className={clsx(
            "whitespace-nowrap",
            active === name
              ? "h-[25px] w-[130px] border-r border-b-2 border-l border-x-[#9b9b9b] border-b-[#217346] bg-white pt-0.5 text-[13px] leading-4 font-bold text-[#217346]"
              : "w-[112px] border-t border-[#9b9b9b] text-[#444]",
          )}
        >
          {name}
        </button>
      ))}
      <div className="flex flex-1 items-center border-t border-[#9b9b9b]">
        <Separator className="h-5 bg-[#9b9b9b]" />
        <button type="button" aria-label="New sheet" className="ml-8">
          <svg width="17" height="17" viewBox="0 0 17 17" fill="none" stroke="#777" aria-hidden>
            <circle cx="8.500" cy="8.500" r="7.500" />
            <path d="M8.500 4.500v8M4.500 8.500h8" strokeWidth="2" />
          </svg>
        </button>
        <div className="mr-[21px] ml-auto flex w-[523px] items-center">
          <Dots />
          <ScrollButton label="Scroll left" size="ml-auto h-[15px] w-[15px]" d="M6 0v8L2 4z" />
          <div className="flex h-[15px] w-[476px] bg-[#dadada]">
            <span className="w-[444px] border border-[#ababab] bg-white" />
          </div>
          <ScrollButton label="Scroll right" size="h-[15px] w-[15px]" d="M2 0v8l4-4z" />
        </div>
      </div>
    </div>
  );
}

function StatusBar() {
  const [zoom, setZoom] = useState(100);
  return (
    <div className="flex h-[21px] items-center justify-end bg-[#f3f3f3] text-[#444]">
      <button type="button" aria-label="Normal view" className="flex h-full w-[38px] items-center justify-center bg-[#c6c6c6]">
        <svg width="13" height="13" viewBox="0 0 13 13" fill="none" stroke="#555" aria-hidden><path d="M.5.500h12v12H.5zM.5 4.500h12M.5 8.500h12M4.500.5v12M8.500.5v12" /></svg>
      </button>
      <button type="button" aria-label="Page layout view" className="flex w-[38px] justify-center">
        <svg width="14" height="13" viewBox="0 0 14 13" fill="none" stroke="#555" aria-hidden><path d="M.5.5h13v12H.5zM3.500 2.500h7v8h-7zM5 4.500h4M5 6.500h4M5 8.500h4" /></svg>
      </button>
      <button type="button" aria-label="Page break preview" className="flex w-[38px] justify-center">
        <svg width="14" height="13" viewBox="0 0 14 13" fill="none" stroke="#555" aria-hidden><path d="M13.500 12.500H.5V.5h13zM5.500.5v7M9.500.5v7M1 7.500h9" /></svg>
      </button>
      <button type="button" aria-label="Zoom out" className="ml-1.5 h-0.5 w-1.5 bg-[#555]" />
      <input
        type="range"
        aria-label="Zoom"
        min={0}
        max={200}
        value={zoom}
        onChange={(e) => setZoom(Number(e.target.value))}
        className="mx-1 h-3 w-[100px] appearance-none bg-[linear-gradient(#a6a6a6,#a6a6a6)] bg-size-[100%_1px] bg-center bg-no-repeat [&::-webkit-slider-thumb]:h-[11px] [&::-webkit-slider-thumb]:w-[5px] [&::-webkit-slider-thumb]:appearance-none [&::-webkit-slider-thumb]:bg-[#666]"
      />
      <button type="button" aria-label="Zoom in">
        <svg width="7" height="7" stroke="#555" strokeWidth="2" aria-hidden><path d="M0 3.500h7M3.500 0v7" /></svg>
      </button>
      <span className="mr-2 ml-2.5 text-[11px]">100%</span>
    </div>
  );
}

/* ---------- taskbar ---------- */

function TaskItem({ label, running, active, children }: { label: string; running?: boolean; active?: boolean; children: ReactNode }) {
  return (
    <button type="button" aria-label={label} className={clsx("relative flex h-10 w-[49px] shrink-0 items-center justify-center", active && "border-r-4 border-[#0d5f6f] bg-[#1b7d90]")}>
      {children}
      {running && <span className={clsx("absolute bottom-0 h-0.5 bg-[#a6eef5]", active ? "inset-x-0" : "inset-x-1")} />}
    </button>
  );
}

function OfficeIcon({ letter, shades, plate }: { letter: string; shades: string[]; plate: string }) {
  return (
    <svg width="24" height="22" viewBox="0 0 24 22" aria-hidden>
      <rect x="7" y="0" width="17" height="6" fill={shades[0]} />
      <rect x="7" y="6" width="17" height="5" fill={shades[1]} />
      <rect x="7" y="11" width="17" height="5" fill={shades[2]} />
      <rect x="7" y="16" width="17" height="5" fill={shades[3]} />
      <rect x="0" y="5" width="13" height="13" fill={plate} />
      <text x="6.500" y="15" fontSize="11" fontWeight="700" textAnchor="middle" fill="#fff">{letter}</text>
    </svg>
  );
}

function Taskbar() {
  return (
    <footer className="flex h-10 bg-[#054a57] text-white">
      <TaskItem label="Start">
        <svg width="16" height="16" viewBox="0 0 16 16" fill="#fff" aria-hidden>
          <path d="M0 2.200 6.500 1.300v6.200H0zM7.300 1.200 16 0v7.500H7.300zM0 8.400h6.500v6.300L0 13.800zM7.300 8.400H16V16l-8.700-1.200z" />
        </svg>
      </TaskItem>
      <TaskItem label="Paint">
        <svg width="24" height="24" viewBox="0 0 24 24" aria-hidden>
          <path d="M1 14C0 8 7 3 14 4c7 0 9 5 7 10-2 4-5 7-8 5-3-1-3 3-7 2-3-1-5-4-5-7z" fill="#cfe3ec" />
          <circle cx="5" cy="12" r="2" fill="#d9442f" /><circle cx="8" cy="8" r="2" fill="#58a83c" />
          <circle cx="14" cy="7" r="1.800" fill="#e9b93a" /><circle cx="7" cy="17" r="2.200" fill="#3e8ed0" />
          <circle cx="12" cy="14" r="1.600" fill="#054a57" />
          <path d="M20 4 14 22l-1 1 0-3 5-16z" fill="#c87533" /><path d="m18 5 2-5 4 1-2 5z" fill="#d9a36a" />
        </svg>
      </TaskItem>
      <TaskItem label="Control Panel">
        <svg width="21" height="17" viewBox="0 0 21 17" aria-hidden>
          <rect x=".5" y="1" width="20" height="15" rx="1" fill="#7cc4ee" stroke="#cfe8f6" />
          <circle cx="6.500" cy="7" r="3.500" fill="#1e6fb0" /><path d="M6.500 7V3.500A3.500 3.500 0 0 1 10 7z" fill="#f2b33c" />
          <path d="M13 4h5v2h-5zM13 8h5v2h-5zM12 12h7v1.500h-7z" fill="#1e6fb0" /><path d="M3 12h6v1.500H3z" fill="#fff" />
        </svg>
      </TaskItem>
      <TaskItem label="Chrome" running>
        <svg width="22" height="22" viewBox="0 0 22 22" aria-hidden>
          <path d="M11 11 1.500 5.500A11 11 0 0 1 20.500 5.500z" fill="#dd4b3e" />
          <path d="M11 11 1.500 5.500A11 11 0 0 0 11 22l5-8z" fill="#1fa15d" />
          <path d="M11 5.500h9.500A11 11 0 0 1 11 22l5-8z" fill="#fdd14b" />
          <circle cx="11" cy="11" r="5" fill="#fff" /><circle cx="11" cy="11" r="4" fill="#4c8bf5" />
        </svg>
      </TaskItem>
      <TaskItem label="File Explorer" running>
        <svg width="22" height="20" viewBox="0 0 22 20" aria-hidden>
          <path d="M0 1h8l2 2h11v15H0z" fill="#f5c84c" /><path d="M0 5h22v13H0z" fill="#fde08a" />
          <path d="M4 19v-8h14v8h-4v-4H8v4z" fill="#35b1e6" />
        </svg>
      </TaskItem>
      <TaskItem label="Word" running>
        <OfficeIcon letter="W" plate="#1a5dbe" shades={["#41a5ee", "#2b7cd3", "#185abd", "#103f91"]} />
      </TaskItem>
      <TaskItem label="Excel" running active>
        <OfficeIcon letter="X" plate="#107c41" shades={["#33c481", "#21a366", "#107c41", "#185c37"]} />
      </TaskItem>
      <TaskItem label="Calculator">
        <svg width="18" height="24" viewBox="0 0 18 24" aria-hidden>
          <path d="M0 0h18v24H0z" fill="#fff" />
          <path d="M2.500 2.500h13v4h-13zM3 9h3v3H3zM7.500 9h3v3h-3zM12 9h3v3h-3zM3 13.500h3v3H3zM7.500 13.500h3v3h-3zM12 13.500h3v3h-3zM3 18h3v3H3zM7.500 18h3v3h-3zM12 18h3v3h-3z" fill="#054a57" />
        </svg>
      </TaskItem>
      <TaskItem label="WordPad">
        <svg width="18" height="21" viewBox="0 0 18 21" aria-hidden>
          <path d="M0 0h16v17l2 3H1L0 17z" fill="#dbe9f5" /><path d="M0 0h16v3H0z" fill="#5c8db8" />
          <path d="M0 3h1v14H0zM15 3h1v14h-1z" fill="#5c8db8" />
          <text x="2" y="13" fontSize="11" fontWeight="700" fill="#ef8a2d" fontFamily="Liberation Serif">A</text>
          <path d="M10 7h5v2h-5z" fill="#4a8fd4" /><path d="M2 15h12v1H2z" fill="#8aa6c0" />
        </svg>
      </TaskItem>
      <TaskItem label="Spotify">
        <svg width="22" height="22" viewBox="0 0 22 22" fill="none" stroke="#0c1c14" strokeLinecap="round" aria-hidden>
          <circle cx="11" cy="11" r="11" fill="#1ed760" stroke="none" />
          <path d="M4.500 7.500c4.500-1.300 9-1 13 1.200" strokeWidth="2.200" />
          <path d="M5 11.200c4-1.200 7.500-.8 11 1.100" strokeWidth="1.800" />
          <path d="M5.500 14.600c3.500-1 6.500-.7 9.300 1" strokeWidth="1.500" />
        </svg>
      </TaskItem>
      <div className="ml-auto flex items-center">
        <svg width="12" height="7" viewBox="0 0 12 7" fill="none" stroke="#fff" strokeWidth="1.200" aria-hidden><path d="m.5 6.500 5.500-5.500 5.500 5.500" /></svg>
        <svg width="14" height="14" viewBox="0 0 14 14" className="ml-3" fill="none" stroke="#dfe9eb" aria-hidden>
          <path d="M1 13C1 6 6 1 13 1M4 13c0-5 4-9 9-9M7 13c0-3 3-6 6-6M9.500 13c0-2 2-3.500 3.500-3.500" />
          <circle cx="12" cy="12.500" r="1.200" fill="#fff" />
        </svg>
        <svg width="18" height="14" viewBox="0 0 18 14" className="ml-[7px]" fill="none" stroke="#fff" aria-hidden>
          <path d="M1 4.500h2.500l4-3.500v12l-4-3.500H1zM9.500 5c1 1.300 1 2.700 0 4M11.800 3c2 2.500 2 5.500 0 8M14 1.500c3 3.500 3 7.500 0 11" />
        </svg>
        <span className="ml-2">ENG</span>
        <time dateTime="2019-11-16T16:17" className="ml-2 flex w-[68px] flex-col text-center leading-[18px]">
          <span>4:17 PM</span>
          <span>2019-11-16</span>
        </time>
        <button type="button" aria-label="Notifications" className="relative mr-4 ml-2.5 h-6 w-6">
          <svg width="16" height="17" viewBox="0 0 16 17" className="absolute top-1 left-1" aria-hidden>
            <path d="M0 0h16v13H7l-3 4v-4H0z" fill="#fff" /><path d="M2.500 3.500h11M2.500 6.500h11M2.500 9.500h7" stroke="#054a57" />
          </svg>
          <span className="absolute top-2.5 left-2.5 flex size-4 items-center justify-center rounded-full border border-[#6fb9c2] bg-[#0a7a8a] text-[11px] leading-none font-semibold">3</span>
        </button>
        <span className="h-full w-1 border-l border-[#4d8b95]" />
      </div>
    </footer>
  );
}

export default function App() {
  return (
    <div className="flex h-screen min-h-96 flex-col overflow-hidden bg-[#e6e6e6] [font-family:'Open_Sans',sans-serif] text-xs">
      <div className="bg-[#217346]">
        <TitleBar />
        <RibbonTabs />
      </div>
      <Ribbon />
      <FormulaBar />
      <main className="flex min-h-0 flex-1">
        <div className="min-w-0 flex-1 overflow-hidden border-r border-[#9b9b9b] bg-white">
          <Sheet />
        </div>
        <div className="mr-0.5 ml-[3px] flex w-4 flex-col pt-0.5">
          <ScrollButton label="Scroll up" size="h-[15px] w-full" d="M0 6h8L4 2z" />
          <div className="flex-1 bg-[#dadada]">
            <div className="h-2/3 border border-[#ababab] bg-white" />
          </div>
          <ScrollButton label="Scroll down" size="h-[15px] w-full" d="M0 2h8L4 6z" />
        </div>
      </main>
      <SheetTabs />
      <StatusBar />
      <Taskbar />
    </div>
  );
}
